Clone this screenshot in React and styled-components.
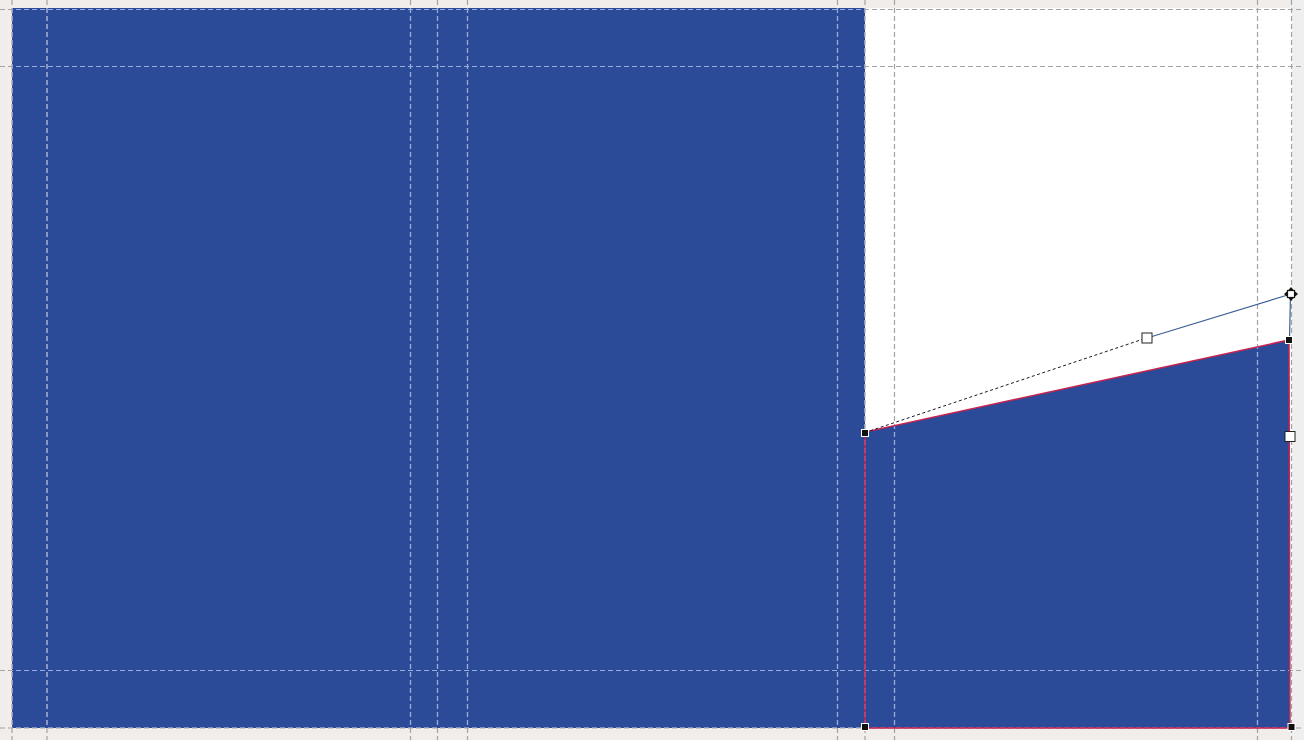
import React from 'react';
import styled, { createGlobalStyle } from 'styled-components';

const GlobalStyle = createGlobalStyle`
  html, body {
    margin: 0;
    padding: 0;
    background: #f0edea;
    font-family: "Liberation Sans", Arial, sans-serif;
    overflow: hidden;
  }
`;

const Workspace = styled.div`
  position: relative;
  width: 1304px;
  height: 740px;
  box-sizing: border-box;
  padding: 8px 12px 12px 12px;
  background: linear-gradient(to right, #f0edea 0, #f0edea 1292px, #efefef 1292px);
`;

const Page = styled.div`
  display: flex;
  width: 1280px;
  height: 720px;
`;

const CoverPanel = styled.div`
  width: 853px;
  height: 100%;
  background: #2b4a98;
`;

const SpinePanel = styled.div`
  flex: 1;
  height: 100%;
  background: #ffffff;
`;

const ShapeCanvas = styled.svg`
  display: block;
  width: 100%;
  height: 100%;
  overflow: visible;
`;

const Overlay = styled.svg`
  position: absolute;
  left: 0;
  top: 0;
  width: 1304px;
  height: 740px;
  pointer-events: none;
`;

const verticals = [12, 47, 410.5, 437.5, 467.5, 837.5, 865, 894.5, 1257.5, 1291.5];
const horizontals = [9.5, 66.5, 670.5, 728];

// polygon in page (viewport) coords
const poly = '865,432 1289,340 1290,728 865,728';

const Guides = ({ stroke, clip }) => (
  <g stroke={stroke} strokeWidth="1.2" strokeDasharray="5 3" clipPath={clip}>
    {verticals.map((x) => (
      <line key={'v' + x} x1={x} y1="0" x2={x} y2="740" />
    ))}
    {horizontals.map((y) => (
      <line key={'h' + y} x1="0" y1={y} x2="1304" y2={y} />
    ))}
  </g>
);

const Knob = ({ x, y }) => (
  <rect x={x - 3.5} y={y - 3.5} width="7" height="7" fill="#111" stroke="#fff" strokeWidth="1" />
);

const Grip = ({ x, y }) => (
  <rect x={x - 5} y={y - 5} width="10" height="10" fill="#fff" stroke="#222" strokeWidth="1" />
);

const MoveHandle = ({ x, y }) => (
  <g>
    <path
      d={`M${x} ${y - 7} l-3 3.5 h6 z M${x} ${y + 7} l-3 -3.5 h6 z M${x - 7} ${y} l3.5 -3 v6 z M${x + 7} ${y} l-3.5 -3 v6 z`}
      fill="#111"
    />
    <rect x={x - 3.5} y={y - 3.5} width="7" height="7" fill="#fff" stroke="#111" strokeWidth="1.2" />
  </g>
);

export default function App() {
  return (
    <>
      <GlobalStyle />
      <Workspace>
        <Page>
          <CoverPanel />
          <SpinePanel>
            <ShapeCanvas viewBox="0 0 427 720">
              <polygon points="0,424 424,332 425,720 0,720" fill="#2b4a98" />
            </ShapeCanvas>
          </SpinePanel>
        </Page>
        <Overlay viewBox="0 0 1304 740">
          <defs>
            <clipPath id="blueArea">
              <rect x="12" y="8" width="853" height="720" />
              <polygon points={poly} />
            </clipPath>
          </defs>
          <Guides stroke="#a3a3a3" />
          <Guides stroke="#97abdf" clip="url(#blueArea)" />
          <polyline
            points="865,728 865,432 1289,340 1290,728 865,728"
            fill="none"
            stroke="#c8234f"
            strokeWidth="1.5"
          />
          <line x1="865" y1="432.5" x2="1142" y2="339.5" stroke="#1a1a2a" strokeWidth="1" strokeDasharray="3 2.5" />
          <line x1="1152" y1="336.5" x2="1291" y2="294" stroke="#3b5f94" strokeWidth="1.2" />
          <line x1="1290.5" y1="294" x2="1289.5" y2="340" stroke="#3b5f94" strokeWidth="1.2" />
          <Grip x={1147} y={338} />
          <Grip x={1290} y={436.5} />
          <Knob x={865} y={433} />
          <Knob x={1289} y={340} />
          <Knob x={865} y={727} />
          <Knob x={1291.5} y={727} />
          <MoveHandle x={1291} y={294} />
        </Overlay>
      </Workspace>
    </>
  );
}
